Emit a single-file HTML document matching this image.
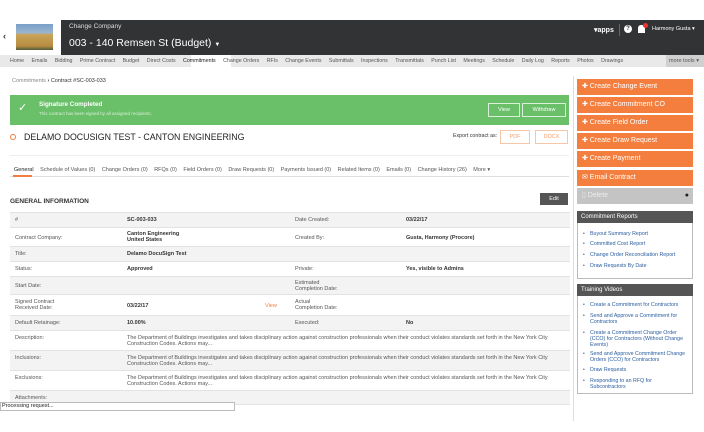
<!DOCTYPE html><html><head><style>
*{margin:0;padding:0;box-sizing:border-box}
body{width:704px;height:432px;background:#fff;font-family:"Liberation Sans",sans-serif;position:relative;overflow:hidden;color:#333}
.a{position:absolute;white-space:nowrap}
.nav span{margin-right:7.4px}
.sb{position:absolute;left:577px;width:116px;height:16px;background:#f47e3e;color:#fff;font-size:7px;line-height:16px;padding-left:5px}
.row{position:absolute;left:10px;width:560px;border-top:1px solid #e2e2e2;font-size:5.5px;color:#555}
.row b{font-weight:bold;color:#333}
.lk{color:#2a5d9f;font-size:5.3px;position:absolute;left:590px;line-height:6px}
.dot{position:absolute;left:583px;font-size:5px;color:#2a5d9f}
.tabs span{margin-right:6.5px}
</style></head><body>
<div class="a" style="left:3px;top:31px;font-size:9px;font-weight:bold">‹</div>
<div class="a" style="left:16px;top:24px;width:37px;height:26px;background:linear-gradient(#7aa0c8 0,#9cb6cf 35%,#c9a45a 40%,#b68c40 85%,#4e5a3a 100%)"></div>
<div class="a" style="left:61px;top:20px;width:643px;height:35px;background:#323335"></div>
<div class="a" style="left:69px;top:23px;font-size:6.5px;color:#ddd">Change Company</div>
<div class="a" style="left:69px;top:37px;font-size:10.5px;color:#fff">003 - 140 Remsen St (Budget) <span style="font-size:6px">▼</span></div>
<div class="a" style="left:594px;top:26px;font-size:7px;color:#fff;font-weight:bold">▾apps</div>
<div class="a" style="left:619px;top:24px;width:1px;height:12px;background:#666"></div>
<div class="a" style="left:624px;top:25px;width:8px;height:8px;border-radius:50%;background:#fff;color:#323335;font-size:6px;text-align:center;line-height:8px;font-weight:bold">?</div>
<div class="a" style="left:638px;top:25px;width:7px;height:8px;background:#fff;border-radius:3px 3px 0 0"></div>
<div class="a" style="left:643px;top:23px;width:5px;height:5px;border-radius:50%;background:#e33"></div>
<div class="a" style="left:652px;top:26px;font-size:5.5px;color:#fff">Harmony Gusta ▾</div>
<div class="a" style="left:0;top:55px;width:704px;height:12px;background:#e9e9e9"></div>
<div class="a" style="left:191px;top:55px;width:40px;height:12px;background:#fff"></div>
<div class="a" style="left:666px;top:55px;width:38px;height:12px;background:#d0d0d0"></div>
<div class="a nav" style="left:10px;top:58px;font-size:5.3px;color:#555"><span>Home</span><span>Emails</span><span>Bidding</span><span>Prime Contract</span><span>Budget</span><span>Direct Costs</span><span style="color:#222">Commitments</span><span>Change Orders</span><span>RFIs</span><span>Change Events</span><span>Submittals</span><span>Inspections</span><span>Transmittals</span><span>Punch List</span><span>Meetings</span><span>Schedule</span><span>Daily Log</span><span>Reports</span><span>Photos</span><span>Drawings</span></div>
<div class="a" style="left:669px;top:58px;font-size:5.5px;color:#555">more tools ▾</div>
<div class="a" style="left:12px;top:78px;font-size:5.5px;color:#888">Commitments <b style="color:#333">›</b> <span style="color:#333">Contract #SC-003-033</span></div>
<div class="a" style="left:10px;top:95px;width:559px;height:30px;background:#6abf69"></div>
<div class="a" style="left:18px;top:101px;font-size:11px;color:#fff">✓</div>
<div class="a" style="left:39px;top:101px;font-size:6.3px;color:#fff;font-weight:bold">Signature Completed</div>
<div class="a" style="left:39px;top:111px;font-size:4.5px;color:#d8efd8">This contract has been signed by all assigned recipients.</div>
<div class="a" style="left:488px;top:103px;width:32px;height:14px;border:1px solid #d8efd8;color:#fff;font-size:5.5px;text-align:center;line-height:12px">View</div>
<div class="a" style="left:522px;top:103px;width:44px;height:14px;border:1px solid #d8efd8;color:#fff;font-size:5.5px;text-align:center;line-height:12px">Withdraw</div>
<div class="a" style="left:10px;top:134px;width:6px;height:6px;border-radius:50%;border:1.5px solid #f47e3e"></div>
<div class="a" style="left:24px;top:132px;font-size:8.8px;color:#222">DELAMO DOCUSIGN TEST - CANTON ENGINEERING</div>
<div class="a" style="left:453px;top:133px;font-size:5.3px">Export contract as:</div>
<div class="a" style="left:500px;top:130px;width:30px;height:14px;border:1px solid #f5c6a8;color:#f5a070;font-size:5.5px;text-align:center;line-height:12px">PDF</div>
<div class="a" style="left:535px;top:130px;width:33px;height:14px;border:1px solid #f5c6a8;color:#f5a070;font-size:5.5px;text-align:center;line-height:12px">DOCX</div>
<div class="a" style="left:10px;top:155px;width:559px;height:1px;background:#eee"></div>
<div class="a tabs" style="left:14px;top:167px;font-size:5.5px;color:#555"><span style="color:#222">General</span><span>Schedule of Values (0)</span><span>Change Orders (0)</span><span>RFQs (0)</span><span>Field Orders (0)</span><span>Draw Requests (0)</span><span>Payments Issued (0)</span><span>Related Items (0)</span><span>Emails (0)</span><span>Change History (26)</span><span>More ▾</span></div>
<div class="a" style="left:10px;top:176px;width:559px;height:1px;background:#ddd"></div>
<div class="a" style="left:13px;top:175px;width:19px;height:2px;background:#f47e3e"></div>
<div class="a" style="left:10px;top:198px;font-size:6.5px;color:#333;font-weight:bold">GENERAL INFORMATION</div>
<div class="a" style="left:540px;top:193px;width:28px;height:12px;background:#555;color:#fff;font-size:5.5px;text-align:center;line-height:12px">Edit</div>

<div class="row" style="top:212px;height:15px;background:#f3f3f3"><span class="a" style="left:5px;top:4px">#</span><b class="a" style="left:117px;top:4px">SC-003-033</b><span class="a" style="left:285px;top:4px">Date Created:</span><b class="a" style="left:396px;top:4px">03/22/17</b></div>
<div class="row" style="top:227px;height:19px;background:#fff"><span class="a" style="left:5px;top:7px">Contract Company:</span><b class="a" style="left:117px;top:3px;line-height:6px">Canton Engineering<br>United States</b><span class="a" style="left:285px;top:7px">Created By:</span><b class="a" style="left:396px;top:7px">Gusta, Harmony (Procore)</b></div>
<div class="row" style="top:246px;height:15px;background:#f3f3f3"><span class="a" style="left:5px;top:4px">Title:</span><b class="a" style="left:117px;top:4px">Delamo DocuSign Test</b></div>
<div class="row" style="top:261px;height:15px;background:#fff"><span class="a" style="left:5px;top:4px">Status:</span><b class="a" style="left:117px;top:4px">Approved</b><span class="a" style="left:285px;top:4px">Private:</span><b class="a" style="left:396px;top:4px">Yes, visible to Admins</b></div>
<div class="row" style="top:276px;height:18px;background:#f3f3f3"><span class="a" style="left:5px;top:6px">Start Date:</span><span class="a" style="left:285px;top:3px;line-height:6px">Estimated<br>Completion Date:</span></div>
<div class="row" style="top:294px;height:21px;background:#fff"><span class="a" style="left:5px;top:4px;line-height:6px">Signed Contract<br>Received Date:</span><b class="a" style="left:117px;top:8px">03/22/17</b><span class="a" style="left:255px;top:8px;color:#f47e3e">View</span><span class="a" style="left:285px;top:4px;line-height:6px">Actual<br>Completion Date:</span></div>
<div class="row" style="top:315px;height:15px;background:#f3f3f3"><span class="a" style="left:5px;top:4px">Default Retainage:</span><b class="a" style="left:117px;top:4px">10.00%</b><span class="a" style="left:285px;top:4px">Executed:</span><b class="a" style="left:396px;top:4px">No</b></div>
<div class="row" style="top:330px;height:20px;background:#fff"><span class="a" style="left:5px;top:4px">Description:</span><span class="a" style="left:117px;top:4px;line-height:6px">The Department of Buildings investigates and takes disciplinary action against construction professionals when their conduct violates standards set forth in the New York City<br>Construction Codes. Actions may...</span></div>
<div class="row" style="top:350px;height:20px;background:#f3f3f3"><span class="a" style="left:5px;top:4px">Inclusions:</span><span class="a" style="left:117px;top:4px;line-height:6px">The Department of Buildings investigates and takes disciplinary action against construction professionals when their conduct violates standards set forth in the New York City<br>Construction Codes. Actions may...</span></div>
<div class="row" style="top:370px;height:20px;background:#fff"><span class="a" style="left:5px;top:4px">Exclusions:</span><span class="a" style="left:117px;top:4px;line-height:6px">The Department of Buildings investigates and takes disciplinary action against construction professionals when their conduct violates standards set forth in the New York City<br>Construction Codes. Actions may...</span></div>
<div class="row" style="top:390px;height:15px;background:#f3f3f3;border-bottom:1px solid #e2e2e2"><span class="a" style="left:5px;top:4px">Attachments:</span></div>
<div class="a" style="left:0;top:402px;width:235px;height:9px;background:#fff;border:1px solid #bbb;font-size:5.5px;line-height:7px;padding-left:1px;color:#222">Processing request...</div>
<div class="a" style="left:573px;top:76px;width:1px;height:345px;background:#ddd"></div>

<div class="sb" style="top:79px">✚ Create Change Event</div>
<div class="sb" style="top:97px">✚ Create Commitment CO</div>
<div class="sb" style="top:115px">✚ Create Field Order</div>
<div class="sb" style="top:133px">✚ Create Draw Request</div>
<div class="sb" style="top:151px">✚ Create Payment</div>
<div class="sb" style="top:170px">✉ Email Contract</div>
<div class="sb" style="top:188px;background:#c4c4c4;color:#eee">▯ Delete<span style="position:absolute;right:4px;color:#222">●</span></div>
<div class="a" style="left:577px;top:211px;width:116px;height:68px;border:1px solid #bbb"></div>
<div class="a" style="left:577px;top:211px;width:116px;height:12px;background:#555;color:#fff;font-size:6px;line-height:12px;padding-left:4px">Commitment Reports</div>
<div class="dot" style="top:231px">•</div><div class="lk" style="top:231px">Buyout Summary Report</div>
<div class="dot" style="top:241px">•</div><div class="lk" style="top:241px">Committed Cost Report</div>
<div class="dot" style="top:252px">•</div><div class="lk" style="top:252px">Change Order Reconciliation Report</div>
<div class="dot" style="top:263px">•</div><div class="lk" style="top:263px">Draw Requests By Date</div>
<div class="a" style="left:577px;top:284px;width:116px;height:110px;border:1px solid #bbb"></div>
<div class="a" style="left:577px;top:284px;width:116px;height:12px;background:#555;color:#fff;font-size:6px;line-height:12px;padding-left:4px">Training Videos</div>
<div class="dot" style="top:302px">•</div><div class="lk" style="top:302px">Create a Commitment for Contractors</div>
<div class="dot" style="top:313px">•</div><div class="lk" style="top:313px">Send and Approve a Commitment for<br>Contractors</div>
<div class="dot" style="top:330px">•</div><div class="lk" style="top:330px">Create a Commitment Change Order<br>(CCO) for Contractors (Without Change<br>Events)</div>
<div class="dot" style="top:351px">•</div><div class="lk" style="top:351px">Send and Approve Commitment Change<br>Orders (CCO) for Contractors</div>
<div class="dot" style="top:367px">•</div><div class="lk" style="top:367px">Draw Requests</div>
<div class="dot" style="top:378px">•</div><div class="lk" style="top:378px">Responding to an RFQ for<br>Subcontractors</div>
</body></html>
